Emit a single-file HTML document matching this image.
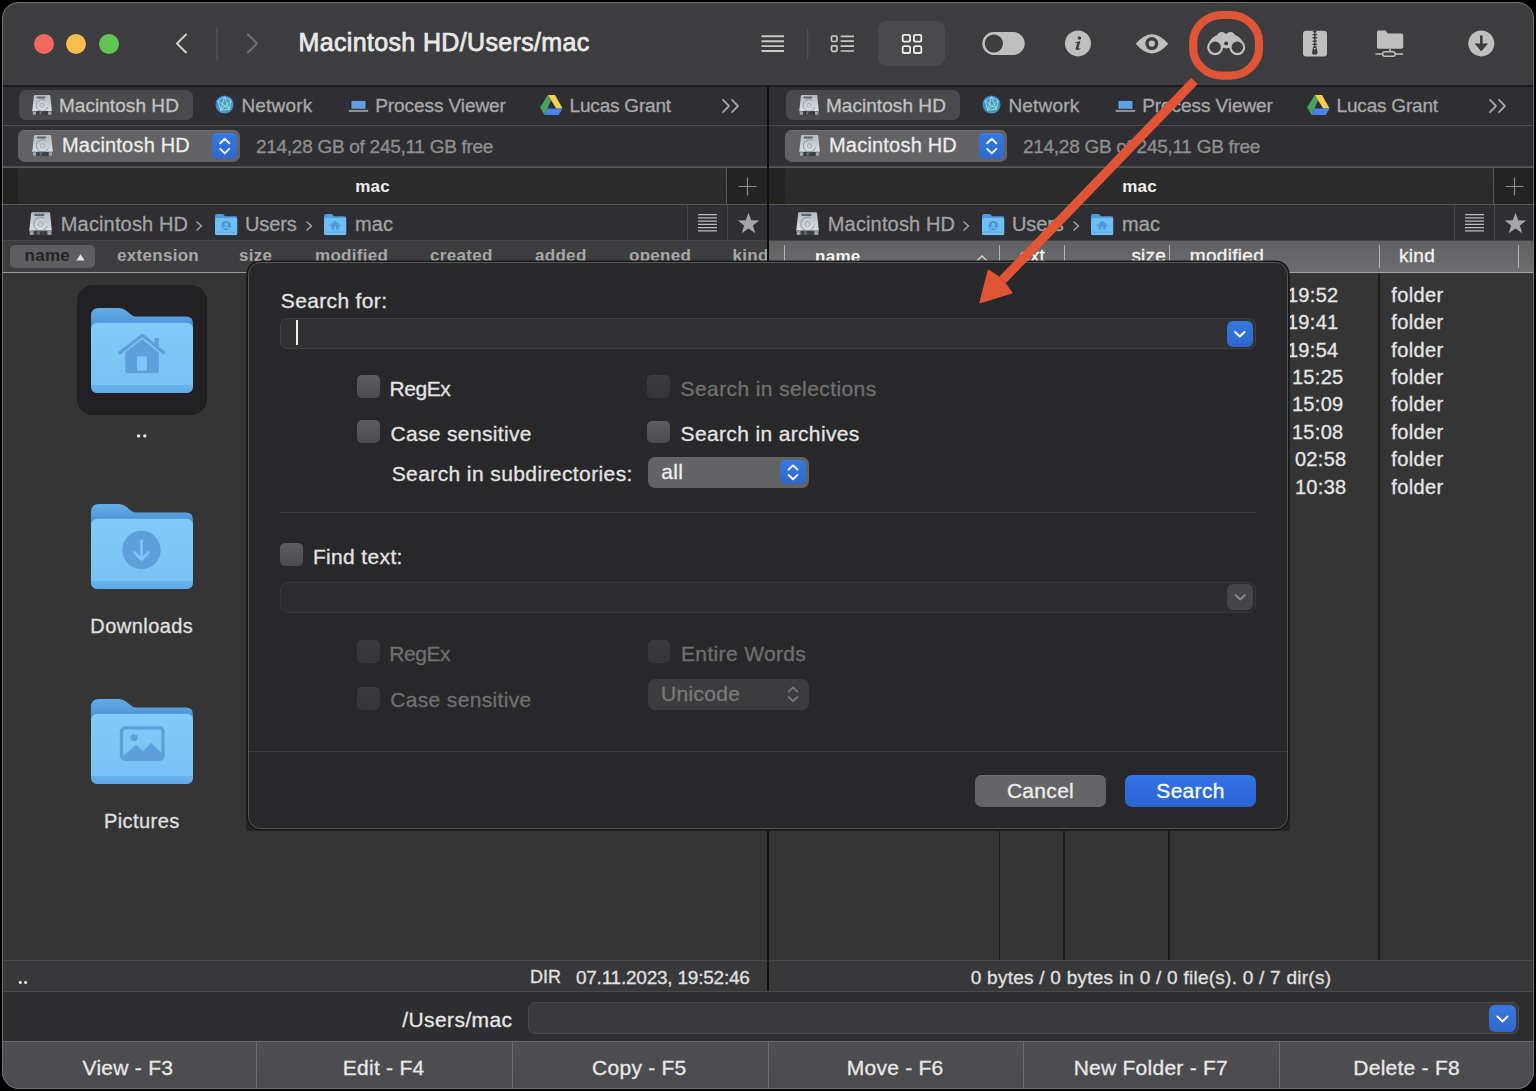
<!DOCTYPE html>
<html><head><meta charset="utf-8">
<style>
*{box-sizing:border-box;margin:0;padding:0}
html,body{width:1536px;height:1091px;overflow:hidden;background:#000;font-family:"Liberation Sans",sans-serif;color:#dcdcdc}
.a{position:absolute}
.t{position:absolute;white-space:pre;line-height:1}
svg{position:absolute;overflow:visible}
#win{position:absolute;left:0;top:0;width:1536px;height:1091px;clip-path:inset(2px round 17px);background:#353537}
#winborder{position:absolute;left:2px;top:2px;width:1532px;height:1087px;border-radius:17px;border:1px solid #717174;pointer-events:none;z-index:50}

</style></head><body>
<svg width="0" height="0" style="position:absolute"><defs><linearGradient id="hdg" x1="0" y1="0" x2="0" y2="1"><stop offset="0" stop-color="#b3bac1"/><stop offset="1" stop-color="#d9e1e7"/></linearGradient>
<symbol id="hd" viewBox="0 0 20 20">
 <path d="M1.9 0.7 Q2 0 2.7 0 L17.5 0 Q18.2 0 18.3 0.7 L19.9 16.4 L0.2 16.4 Z" fill="url(#hdg)"/>
 <rect x="0.3" y="16" width="19.5" height="4.1" rx="0.5" fill="#3b3e42"/>
 <rect x="0.7" y="16.4" width="3.3" height="3.4" fill="#9ea4aa"/><rect x="16" y="16.4" width="3.4" height="3.4" fill="#9ea4aa"/>
 <rect x="7.3" y="16.6" width="2" height="3" fill="#6c7278"/>
 <rect x="4.6" y="1.4" width="8.7" height="2" rx="0.6" fill="#5f656b"/>
 <path d="M13.2 5.3 A5.9 5.9 0 1 0 15.7 12" fill="none" stroke="#7b838b" stroke-width="0.7"/>
 <circle cx="10" cy="10.4" r="2.1" fill="none" stroke="#8f979f" stroke-width="0.6"/>
</symbol>
<radialGradient id="glg" cx="0.55" cy="0.6" r="0.6"><stop offset="0" stop-color="#4aa6ac"/><stop offset="0.6" stop-color="#4a95c0"/><stop offset="1" stop-color="#3a7fd8"/></radialGradient>
<symbol id="globe" viewBox="0 0 20 20">
 <circle cx="10" cy="10" r="9.5" fill="url(#glg)"/>
 <g fill="none" stroke="#b0f4f8" stroke-width="1" opacity="0.75">
  <path d="M3 6 L10 2 L17 6 L15 15 L6 16 Z"/><path d="M10 2 L6 16 M10 2 L15 15 M3 6 L15 15 M17 6 L6 16"/>
 </g>
</symbol>
<symbol id="laptop" viewBox="0 0 19.5 12.5" overflow="visible">
 <rect x="1.6" y="0" width="15.8" height="9.6" rx="0.8" fill="#1b1e23"/>
 <rect x="2.4" y="0.8" width="14.2" height="8" fill="#5f9fe2"/>
 <rect x="-0.2" y="9.8" width="19.4" height="2.2" rx="0.6" fill="#8e8e90"/>
</symbol>
<symbol id="gdrive" viewBox="0 0 22.6 20">
 <path d="M7.9 0 L11 5.6 L4.6 20 L0 12.6 Z" fill="#47a35f"/>
 <path d="M7.9 0 L15 0 L22.6 13.6 L16.2 13.6 Z" fill="#f8d153"/>
 <path d="M7.4 13.6 L22.6 13.6 L18.7 20 L4.6 20 Z" fill="#4c83ea"/>
</symbol>
<linearGradient id="fbk" x1="0" y1="0" x2="0" y2="0.2" gradientUnits="objectBoundingBox"><stop offset="0" stop-color="#64ade7"/><stop offset="0.6" stop-color="#589fdf"/><stop offset="1" stop-color="#4a90d4"/></linearGradient>
<linearGradient id="ffr" x1="0" y1="0" x2="0" y2="1"><stop offset="0" stop-color="#80cbf8"/><stop offset="0.88" stop-color="#78c3f4"/><stop offset="0.89" stop-color="#66b3ec"/><stop offset="1" stop-color="#5eaae8"/></linearGradient>
<symbol id="folder" viewBox="0 0 102 85">
 <path d="M0 8 Q0 0 8 0 L28 0 Q32 0 35 2.5 L40.5 7 Q42.5 8.5 45.5 8.5 L95 8.5 Q102 8.5 102 15.5 L102 78 Q102 85 95 85 L7 85 Q0 85 0 78 Z" fill="url(#fbk)"/>
 <path d="M0 21.5 Q0 14.7 7 14.7 L95 14.7 Q102 14.7 102 21.5 L102 78 Q102 85 95 85 L7 85 Q0 85 0 78 Z" fill="url(#ffr)"/>
</symbol>
<symbol id="homeglyph" viewBox="0 0 102 85">
 <path d="M34.3 44 L51.3 30.5 L67.8 44 L67.8 63 Q67.8 65.3 65.5 65.3 L36.6 65.3 Q34.3 65.3 34.3 63 Z" fill="#5c9fdb"/>
 <rect x="46" y="48.4" width="9.9" height="14.2" fill="#7ec8f7"/>
 <polyline points="28.8,44.7 51.3,27.3 72.8,44.7" fill="none" stroke="#7ec8f7" stroke-width="6" stroke-linecap="round" stroke-linejoin="round"/>
 <polyline points="28.8,44.7 51.3,27.3 72.8,44.7" fill="none" stroke="#5c9fdb" stroke-width="3.2" stroke-linecap="round" stroke-linejoin="round"/>
 <rect x="63.7" y="30" width="4.1" height="9.5" fill="#5c9fdb"/>
</symbol>
<symbol id="dlglyph" viewBox="0 0 102 85">
 <circle cx="50.5" cy="46" r="19.2" fill="#5c9fdb"/>
 <line x1="50.5" y1="36.5" x2="50.5" y2="55" stroke="#7ec8f7" stroke-width="2.6" stroke-linecap="round"/>
 <polyline points="43.5,48.5 50.5,55.5 57.5,48.5" fill="none" stroke="#7ec8f7" stroke-width="2.6" stroke-linecap="round" stroke-linejoin="round"/>
</symbol>
<symbol id="picglyph" viewBox="0 0 102 85">
 <rect x="30.4" y="28.8" width="41.6" height="31.6" rx="3.5" fill="none" stroke="#5c9fdb" stroke-width="3.2"/>
 <circle cx="43" cy="38.5" r="3.6" fill="#5c9fdb"/>
 <path d="M31 58 L45 46 L52 52 L60 44 L71.5 55 L71.5 60 L31 60 Z" fill="#5c9fdb"/>
</symbol>
<symbol id="sfolder" viewBox="0 0 22.4 21.3">
 <path d="M0 2 Q0 0 2 0 L7 0 Q8 0 9 1 L10 2.2 L20.4 2.2 Q22.4 2.2 22.4 4.2 L22.4 19.3 Q22.4 21.3 20.4 21.3 L2 21.3 Q0 21.3 0 19.3 Z" fill="#4f9bdc"/>
 <path d="M0 5.8 Q0 3.9 2 3.9 L20.4 3.9 Q22.4 3.9 22.4 5.8 L22.4 19.3 Q22.4 21.3 20.4 21.3 L2 21.3 Q0 21.3 0 19.3 Z" fill="#6fbff4"/>
 <rect x="0" y="17.6" width="22.4" height="1" fill="#5aaae8"/>
</symbol>
<symbol id="usrglyph" viewBox="0 0 22.4 21.3">
 <circle cx="11.2" cy="11.7" r="4.8" fill="#4f95d6"/>
 <circle cx="11.2" cy="10.4" r="1.7" fill="#6fbff4"/>
 <path d="M8.3 14.6 Q11.2 12 14.1 14.6" fill="none" stroke="#6fbff4" stroke-width="1.3"/>
</symbol>
<symbol id="hmglyph" viewBox="0 0 22.4 21.3">
 <path d="M7.6 11.5 L11.2 8.6 L14.8 11.5 L14.8 15.6 L7.6 15.6 Z" fill="#4f95d6"/>
 <rect x="10.2" y="12.6" width="2" height="3" fill="#6fbff4"/>
 <polyline points="6.2,11.8 11.2,7.6 16.2,11.8" fill="none" stroke="#4f95d6" stroke-width="1.2" stroke-linecap="round"/>
</symbol>
</defs></svg>
<div id="win">
<div class="a" style="left:0px;top:0px;width:1536px;height:85px;background:#3d3d40;"></div>
<div class="a" style="left:0px;top:85px;width:1536px;height:2px;background:#1c1c1e;"></div>
<div class="a" style="left:33.5px;top:33.5px;width:20px;height:20px;border-radius:50%;background:#ee6a5f"></div>
<div class="a" style="left:66px;top:33.5px;width:20px;height:20px;border-radius:50%;background:#f5be4f"></div>
<div class="a" style="left:98.5px;top:33.5px;width:20px;height:20px;border-radius:50%;background:#62c554"></div>
<svg width="1536" height="90" style="left:0;top:0">
 <polyline points="186,34.5 177,43.5 186,52.5" fill="none" stroke="#d2d2d2" stroke-width="2" stroke-linecap="round" stroke-linejoin="round"/>
 <line x1="217" y1="27.5" x2="217" y2="59.5" stroke="#58585b" stroke-width="1.3"/>
 <polyline points="248,34.5 257,43.5 248,52.5" fill="none" stroke="#707073" stroke-width="2" stroke-linecap="round" stroke-linejoin="round"/>
 <g stroke="#c9c9c9" stroke-width="1.9">
  <line x1="761.5" y1="36.3" x2="784" y2="36.3"/><line x1="761.5" y1="41.2" x2="784" y2="41.2"/>
  <line x1="761.5" y1="46.1" x2="784" y2="46.1"/><line x1="761.5" y1="51" x2="784" y2="51"/>
 </g>
 <line x1="807.7" y1="28" x2="807.7" y2="59.5" stroke="#535356" stroke-width="1.2"/>
 <g stroke="#c9c9c9" stroke-width="1.7" fill="none">
  <rect x="831.5" y="36" width="5.5" height="5.5" rx="1.3"/><rect x="831.5" y="45.8" width="5.5" height="5.5" rx="1.3"/>
  <line x1="840.6" y1="36.3" x2="854" y2="36.3"/><line x1="840.6" y1="41.2" x2="854" y2="41.2"/>
  <line x1="840.6" y1="46.1" x2="854" y2="46.1"/><line x1="840.6" y1="51" x2="854" y2="51"/>
 </g>
 <rect x="878" y="20.7" width="67" height="45.3" rx="9" fill="#4a4a4d"/>
 <g stroke="#ececec" stroke-width="1.8" fill="none">
  <rect x="902.7" y="34.9" width="7.4" height="6.8" rx="1.6"/><rect x="913.9" y="34.9" width="7.4" height="6.8" rx="1.6"/>
  <rect x="902.7" y="46.2" width="7.4" height="6.8" rx="1.6"/><rect x="913.9" y="46.2" width="7.4" height="6.8" rx="1.6"/>
 </g>
 <rect x="982.3" y="32.1" width="42.4" height="22.8" rx="11.4" fill="#bfbfbf"/>
 <circle cx="993.9" cy="43.5" r="9.1" fill="#3d3d40"/>
 <circle cx="1078" cy="43.4" r="13" fill="#bfbfbf"/>
 <circle cx="1079.4" cy="38.1" r="1.75" fill="#3d3d40"/>
 <path d="M1074.9 42.7 Q1077.6 41.1 1080.4 41.2 L1078.5 47.9 Q1078.3 48.8 1079.2 48.5 L1080.9 47.9 Q1079.9 50 1077.4 50.1 Q1075.1 50.2 1075.8 48.1 L1077.2 43.2 Q1076.4 42.9 1074.9 43 Z" fill="#3d3d40"/>
 <path d="M1135.7 43.8 Q1151.8 24.5 1168.3 43.8 Q1151.8 63 1135.7 43.8 Z" fill="#bfbfbf"/>
 <circle cx="1151.8" cy="43.6" r="6.5" fill="#3d3d40"/>
 <circle cx="1151.8" cy="43.6" r="3.2" fill="#bfbfbf"/>
 <path d="M1208.4 44 Q1211 37.5 1217 35 L1218.5 33.2 Q1221.8 30.6 1225 33.3 L1226.1 34 L1227.2 33.3 Q1230.5 30.6 1233.7 33.2 L1235.2 35 Q1241.2 37.5 1243.8 44 L1240 47 L1212 47 Z" fill="#bfbfbf"/>
 <circle cx="1215.1" cy="47.3" r="6.85" fill="#3d3d40" stroke="#bfbfbf" stroke-width="2.2"/>
 <circle cx="1237.3" cy="47.3" r="6.85" fill="#3d3d40" stroke="#bfbfbf" stroke-width="2.2"/>
 <path d="M1221.5 39.5 L1230.7 39.5 L1230.2 47.6 Q1226.1 49.2 1222 47.6 Z" fill="#bfbfbf"/>
 <circle cx="1226.1" cy="43.5" r="2" fill="#3d3d40"/>
 <rect x="1303" y="30.7" width="24" height="25.7" rx="3.2" fill="#bfbfbf"/>
 <rect x="1313" y="30.7" width="3.6" height="1.6" fill="#3d3d40"/>
 <rect x="1314.1" y="30.7" width="1.4" height="17" fill="#3d3d40"/>
 <g fill="#3d3d40"><rect x="1312.3" y="33.9" width="5" height="1.4" rx="0.7"/><rect x="1312.3" y="37.1" width="5" height="1.4" rx="0.7"/><rect x="1312.3" y="40.4" width="5" height="1.4" rx="0.7"/><rect x="1312.3" y="43.7" width="5" height="1.4" rx="0.7"/></g>
 <path d="M1313.2 46.4 L1316.4 46.4 L1317.6 53 Q1317.6 54.8 1314.8 54.8 Q1312 54.8 1312 53 Z" fill="#3d3d40"/>
 <rect x="1314" y="48" width="1.6" height="1.4" fill="#bfbfbf"/>
 <path d="M1377 32 Q1377 30.5 1378.5 30.5 L1385.5 30.5 L1388 33.6 L1401.7 33.6 Q1403.2 33.6 1403.2 35.1 L1403.2 47.3 Q1403.2 48.7 1401.7 48.7 L1378.5 48.7 Q1377 48.7 1377 47.3 Z" fill="#bfbfbf"/>
 <line x1="1390" y1="48.7" x2="1390" y2="52" stroke="#bfbfbf" stroke-width="1.6"/>
 <line x1="1375.5" y1="54" x2="1403" y2="54" stroke="#bfbfbf" stroke-width="1.6"/>
 <rect x="1382.6" y="51.7" width="12.6" height="4.6" rx="2.3" fill="#3d3d40" stroke="#bfbfbf" stroke-width="1.5"/>
 <circle cx="1481.3" cy="43.4" r="13" fill="#bfbfbf"/>
 <rect x="1480" y="35.5" width="2.6" height="9" fill="#3d3d40"/>
 <path d="M1474.5 43.5 L1488.1 43.5 L1481.3 51.5 Z" fill="#3d3d40"/>
</svg>

<div class="t" style="left:298.5px;top:30.44px;font-size:25px;font-weight:400;color:#e9e9e9;letter-spacing:0.35px;-webkit-text-stroke:0.75px #e9e9e9;">Macintosh HD/Users/mac</div>
<div class="a" style="left:0px;top:87px;width:768px;height:38px;background:#2f2f33;"></div>
<div class="a" style="left:0px;top:125px;width:768px;height:1px;background:#4d4d50;"></div>
<div class="a" style="left:19px;top:90px;width:174px;height:29.5px;border-radius:7px;background:#4a4a4d"></div>
<svg style="left:32px;top:94.5px" width="20" height="20"><use href="#hd" width="20" height="20"/></svg>
<div class="t" style="left:58.9px;top:95.52px;font-size:19px;font-weight:400;color:#c3c3c3;letter-spacing:0.06px;-webkit-text-stroke:0.3px #c3c3c3;">Macintosh HD</div>
<svg style="left:214.7px;top:95.2px" width="19" height="19"><use href="#globe" width="19" height="19"/></svg>
<div class="t" style="left:241.4px;top:95.52px;font-size:19px;font-weight:400;color:#a9a9aa;letter-spacing:0.2px;-webkit-text-stroke:0.3px #a9a9aa;">Network</div>
<svg style="left:348.6px;top:100px" width="19.5" height="12.5"><use href="#laptop" width="19.5" height="12.5"/></svg>
<div class="t" style="left:375.2px;top:95.52px;font-size:19px;font-weight:400;color:#a9a9aa;letter-spacing:-0.07px;-webkit-text-stroke:0.3px #a9a9aa;">Process Viewer</div>
<svg style="left:540.4px;top:94.9px" width="22.6" height="20"><use href="#gdrive" width="22.6" height="20"/></svg>
<div class="t" style="left:569.6px;top:95.52px;font-size:19px;font-weight:400;color:#a9a9aa;letter-spacing:-0.2px;-webkit-text-stroke:0.3px #a9a9aa;">Lucas Grant</div>
<svg style="left:720px;top:96.6px;" width="24" height="18" viewBox="0 0 24 18"><polyline points="3,2.8 9,9 3,15.2" fill="none" stroke="#a5a5a6" stroke-width="1.8" stroke-linecap="round" stroke-linejoin="round"/><polyline points="12,2.8 18,9 12,15.2" fill="none" stroke="#a5a5a6" stroke-width="1.8" stroke-linecap="round" stroke-linejoin="round"/></svg>
<div class="a" style="left:0px;top:126px;width:768px;height:40px;background:#2f2f33;"></div>
<div class="a" style="left:0px;top:166px;width:768px;height:1px;background:#4d4d50;"></div>
<div class="a" style="left:18px;top:130px;width:222px;height:32px;border-radius:7px;background:#636366;box-shadow:inset 0 0.5px 0 #7a7a7d"></div>
<div class="a" style="left:211.5px;top:132.8px;width:25.5px;height:26.2px;border-radius:5px;background:linear-gradient(#3779e0,#2f67cb)"></div>
<svg style="left:211.5px;top:132.8px;" width="25.5" height="26.2" viewBox="0 0 25.5 26.2"><polyline points="8.2,10.3 12.75,5.8 17.3,10.3" fill="none" stroke="#eef3fb" stroke-width="2" stroke-linecap="round" stroke-linejoin="round"/><polyline points="8.2,15.9 12.75,20.4 17.3,15.9" fill="none" stroke="#eef3fb" stroke-width="2" stroke-linecap="round" stroke-linejoin="round"/></svg>
<svg style="left:32px;top:135px" width="21" height="21"><use href="#hd" width="21" height="21"/></svg>
<div class="t" style="left:62px;top:135.47px;font-size:20px;font-weight:400;color:#ececec;letter-spacing:0.2px;-webkit-text-stroke:0.3px #ececec;">Macintosh HD</div>
<div class="t" style="left:256px;top:136.62px;font-size:19px;font-weight:400;color:#8f8f91;letter-spacing:-0.28px;-webkit-text-stroke:0.3px #8f8f91;">214,28 GB of 245,11 GB free</div>
<div class="a" style="left:0px;top:167px;width:768px;height:37px;background:linear-gradient(#2e2d2c,#2a2929)"></div>
<div class="a" style="left:0px;top:167px;width:768px;height:1px;background:#58585a;"></div>
<div class="a" style="left:0px;top:204px;width:768px;height:1px;background:#58585a;"></div>
<div class="a" style="left:0px;top:168px;width:18px;height:36px;background:#232221;"></div>
<div class="a" style="left:727px;top:168px;width:40px;height:36px;background:#232323;"></div>
<div class="a" style="left:726px;top:168px;width:1px;height:36px;background:#58585a;"></div>
<svg style="left:737.5px;top:177px;" width="19" height="19" viewBox="0 0 19 19"><line x1="9.5" y1="0.5" x2="9.5" y2="18.5" stroke="#8e8e8e" stroke-width="1.2"/><line x1="0.5" y1="9.5" x2="18.5" y2="9.5" stroke="#8e8e8e" stroke-width="1.2"/></svg>
<div class="t" style="left:72.5px;width:600px;text-align:center;top:177.71px;font-size:17px;font-weight:700;color:#efefef;letter-spacing:0.2px;">mac</div>
<div class="a" style="left:0px;top:205px;width:768px;height:35px;background:#2f2f33;"></div>
<div class="a" style="left:0px;top:240px;width:768px;height:1px;background:#464649;"></div>
<div class="a" style="left:687px;top:205px;width:1px;height:35px;background:#48484b;"></div>
<div class="a" style="left:727px;top:205px;width:1px;height:35px;background:#48484b;"></div>
<svg style="left:698px;top:213px;" width="20" height="20" viewBox="0 0 20 20"><line x1="0" y1="1.70" x2="19" y2="1.70" stroke="#bdbdbd" stroke-width="1.3"/><line x1="0" y1="4.92" x2="19" y2="4.92" stroke="#bdbdbd" stroke-width="1.3"/><line x1="0" y1="8.14" x2="19" y2="8.14" stroke="#bdbdbd" stroke-width="1.3"/><line x1="0" y1="11.36" x2="19" y2="11.36" stroke="#bdbdbd" stroke-width="1.3"/><line x1="0" y1="14.58" x2="19" y2="14.58" stroke="#bdbdbd" stroke-width="1.3"/><line x1="0" y1="17.80" x2="19" y2="17.80" stroke="#bdbdbd" stroke-width="1.3"/></svg>
<svg style="left:736.5px;top:212px;" width="23" height="22" viewBox="0 0 23 22"><path d="M11.5 0.8 L14.2 8.3 L22.2 8.5 L15.9 13.4 L18.2 21.2 L11.5 16.6 L4.8 21.2 L7.1 13.4 L0.8 8.5 L8.8 8.3 Z" fill="#a6a6a8"/></svg>
<svg style="left:28.7px;top:211.7px" width="23" height="23.3"><use href="#hd" width="23" height="23.3"/></svg>
<div class="t" style="left:60.8px;top:213.77px;font-size:20px;font-weight:400;color:#a3a3a5;letter-spacing:0.15px;-webkit-text-stroke:0.3px #a3a3a5;">Macintosh HD</div>
<svg style="left:196px;top:220.6px;" width="7" height="10" viewBox="0 0 7 10"><polyline points="1,1 5.5,5 1,9" fill="none" stroke="#a3a3a5" stroke-width="1.6" stroke-linecap="round" stroke-linejoin="round"/></svg>
<svg style="left:214.6px;top:213.9px" width="22.4" height="21.3"><use href="#sfolder" width="22.4" height="21.3"/></svg>
<svg style="left:214.6px;top:213.9px" width="22.4" height="21.3"><use href="#usrglyph" width="22.4" height="21.3"/></svg>
<div class="t" style="left:245px;top:213.67px;font-size:20px;font-weight:400;color:#a3a3a5;letter-spacing:-0.1px;-webkit-text-stroke:0.3px #a3a3a5;">Users</div>
<svg style="left:305.5px;top:220.6px;" width="7" height="10" viewBox="0 0 7 10"><polyline points="1,1 5.5,5 1,9" fill="none" stroke="#a3a3a5" stroke-width="1.6" stroke-linecap="round" stroke-linejoin="round"/></svg>
<svg style="left:324px;top:213.9px" width="22.4" height="21.3"><use href="#sfolder" width="22.4" height="21.3"/></svg>
<svg style="left:324px;top:213.9px" width="22.4" height="21.3"><use href="#hmglyph" width="22.4" height="21.3"/></svg>
<div class="t" style="left:355px;top:213.67px;font-size:20px;font-weight:400;color:#a3a3a5;letter-spacing:0.15px;-webkit-text-stroke:0.3px #a3a3a5;">mac</div>
<div class="a" style="left:767px;top:87px;width:768px;height:38px;background:#2f2f33;"></div>
<div class="a" style="left:767px;top:125px;width:768px;height:1px;background:#4d4d50;"></div>
<div class="a" style="left:786px;top:90px;width:174px;height:29.5px;border-radius:7px;background:#4a4a4d"></div>
<svg style="left:799px;top:94.5px" width="20" height="20"><use href="#hd" width="20" height="20"/></svg>
<div class="t" style="left:825.9px;top:95.52px;font-size:19px;font-weight:400;color:#c3c3c3;letter-spacing:0.06px;-webkit-text-stroke:0.3px #c3c3c3;">Macintosh HD</div>
<svg style="left:981.7px;top:95.2px" width="19" height="19"><use href="#globe" width="19" height="19"/></svg>
<div class="t" style="left:1008.4px;top:95.52px;font-size:19px;font-weight:400;color:#a9a9aa;letter-spacing:0.2px;-webkit-text-stroke:0.3px #a9a9aa;">Network</div>
<svg style="left:1115.6px;top:100px" width="19.5" height="12.5"><use href="#laptop" width="19.5" height="12.5"/></svg>
<div class="t" style="left:1142.2px;top:95.52px;font-size:19px;font-weight:400;color:#a9a9aa;letter-spacing:-0.07px;-webkit-text-stroke:0.3px #a9a9aa;">Process Viewer</div>
<svg style="left:1307.4px;top:94.9px" width="22.6" height="20"><use href="#gdrive" width="22.6" height="20"/></svg>
<div class="t" style="left:1336.6px;top:95.52px;font-size:19px;font-weight:400;color:#a9a9aa;letter-spacing:-0.2px;-webkit-text-stroke:0.3px #a9a9aa;">Lucas Grant</div>
<svg style="left:1487px;top:96.6px;" width="24" height="18" viewBox="0 0 24 18"><polyline points="3,2.8 9,9 3,15.2" fill="none" stroke="#a5a5a6" stroke-width="1.8" stroke-linecap="round" stroke-linejoin="round"/><polyline points="12,2.8 18,9 12,15.2" fill="none" stroke="#a5a5a6" stroke-width="1.8" stroke-linecap="round" stroke-linejoin="round"/></svg>
<div class="a" style="left:767px;top:126px;width:768px;height:40px;background:#2f2f33;"></div>
<div class="a" style="left:767px;top:166px;width:768px;height:1px;background:#4d4d50;"></div>
<div class="a" style="left:785px;top:130px;width:222px;height:32px;border-radius:7px;background:#636366;box-shadow:inset 0 0.5px 0 #7a7a7d"></div>
<div class="a" style="left:978.5px;top:132.8px;width:25.5px;height:26.2px;border-radius:5px;background:linear-gradient(#3779e0,#2f67cb)"></div>
<svg style="left:978.5px;top:132.8px;" width="25.5" height="26.2" viewBox="0 0 25.5 26.2"><polyline points="8.2,10.3 12.75,5.8 17.3,10.3" fill="none" stroke="#eef3fb" stroke-width="2" stroke-linecap="round" stroke-linejoin="round"/><polyline points="8.2,15.9 12.75,20.4 17.3,15.9" fill="none" stroke="#eef3fb" stroke-width="2" stroke-linecap="round" stroke-linejoin="round"/></svg>
<svg style="left:799px;top:135px" width="21" height="21"><use href="#hd" width="21" height="21"/></svg>
<div class="t" style="left:829px;top:135.47px;font-size:20px;font-weight:400;color:#ececec;letter-spacing:0.2px;-webkit-text-stroke:0.3px #ececec;">Macintosh HD</div>
<div class="t" style="left:1023px;top:136.62px;font-size:19px;font-weight:400;color:#8f8f91;letter-spacing:-0.28px;-webkit-text-stroke:0.3px #8f8f91;">214,28 GB of 245,11 GB free</div>
<div class="a" style="left:767px;top:167px;width:768px;height:37px;background:linear-gradient(#2e2d2c,#2a2929)"></div>
<div class="a" style="left:767px;top:167px;width:768px;height:1px;background:#58585a;"></div>
<div class="a" style="left:767px;top:204px;width:768px;height:1px;background:#58585a;"></div>
<div class="a" style="left:767px;top:168px;width:18px;height:36px;background:#232221;"></div>
<div class="a" style="left:1494px;top:168px;width:40px;height:36px;background:#232323;"></div>
<div class="a" style="left:1493px;top:168px;width:1px;height:36px;background:#58585a;"></div>
<svg style="left:1504.5px;top:177px;" width="19" height="19" viewBox="0 0 19 19"><line x1="9.5" y1="0.5" x2="9.5" y2="18.5" stroke="#8e8e8e" stroke-width="1.2"/><line x1="0.5" y1="9.5" x2="18.5" y2="9.5" stroke="#8e8e8e" stroke-width="1.2"/></svg>
<div class="t" style="left:839.5px;width:600px;text-align:center;top:177.71px;font-size:17px;font-weight:700;color:#efefef;letter-spacing:0.2px;">mac</div>
<div class="a" style="left:767px;top:205px;width:768px;height:35px;background:#2f2f33;"></div>
<div class="a" style="left:767px;top:240px;width:768px;height:1px;background:#464649;"></div>
<div class="a" style="left:1454px;top:205px;width:1px;height:35px;background:#48484b;"></div>
<div class="a" style="left:1494px;top:205px;width:1px;height:35px;background:#48484b;"></div>
<svg style="left:1465px;top:213px;" width="20" height="20" viewBox="0 0 20 20"><line x1="0" y1="1.70" x2="19" y2="1.70" stroke="#bdbdbd" stroke-width="1.3"/><line x1="0" y1="4.92" x2="19" y2="4.92" stroke="#bdbdbd" stroke-width="1.3"/><line x1="0" y1="8.14" x2="19" y2="8.14" stroke="#bdbdbd" stroke-width="1.3"/><line x1="0" y1="11.36" x2="19" y2="11.36" stroke="#bdbdbd" stroke-width="1.3"/><line x1="0" y1="14.58" x2="19" y2="14.58" stroke="#bdbdbd" stroke-width="1.3"/><line x1="0" y1="17.80" x2="19" y2="17.80" stroke="#bdbdbd" stroke-width="1.3"/></svg>
<svg style="left:1503.5px;top:212px;" width="23" height="22" viewBox="0 0 23 22"><path d="M11.5 0.8 L14.2 8.3 L22.2 8.5 L15.9 13.4 L18.2 21.2 L11.5 16.6 L4.8 21.2 L7.1 13.4 L0.8 8.5 L8.8 8.3 Z" fill="#a6a6a8"/></svg>
<svg style="left:795.7px;top:211.7px" width="23" height="23.3"><use href="#hd" width="23" height="23.3"/></svg>
<div class="t" style="left:827.8px;top:213.77px;font-size:20px;font-weight:400;color:#a3a3a5;letter-spacing:0.15px;-webkit-text-stroke:0.3px #a3a3a5;">Macintosh HD</div>
<svg style="left:963px;top:220.6px;" width="7" height="10" viewBox="0 0 7 10"><polyline points="1,1 5.5,5 1,9" fill="none" stroke="#a3a3a5" stroke-width="1.6" stroke-linecap="round" stroke-linejoin="round"/></svg>
<svg style="left:981.6px;top:213.9px" width="22.4" height="21.3"><use href="#sfolder" width="22.4" height="21.3"/></svg>
<svg style="left:981.6px;top:213.9px" width="22.4" height="21.3"><use href="#usrglyph" width="22.4" height="21.3"/></svg>
<div class="t" style="left:1012px;top:213.67px;font-size:20px;font-weight:400;color:#a3a3a5;letter-spacing:-0.1px;-webkit-text-stroke:0.3px #a3a3a5;">Users</div>
<svg style="left:1072.5px;top:220.6px;" width="7" height="10" viewBox="0 0 7 10"><polyline points="1,1 5.5,5 1,9" fill="none" stroke="#a3a3a5" stroke-width="1.6" stroke-linecap="round" stroke-linejoin="round"/></svg>
<svg style="left:1091px;top:213.9px" width="22.4" height="21.3"><use href="#sfolder" width="22.4" height="21.3"/></svg>
<svg style="left:1091px;top:213.9px" width="22.4" height="21.3"><use href="#hmglyph" width="22.4" height="21.3"/></svg>
<div class="t" style="left:1122px;top:213.67px;font-size:20px;font-weight:400;color:#a3a3a5;letter-spacing:0.15px;-webkit-text-stroke:0.3px #a3a3a5;">mac</div>
<div class="a" style="left:0px;top:241px;width:768px;height:31px;background:#3d3d3f;"></div>
<div class="a" style="left:0px;top:272px;width:768px;height:1px;background:#9c9c9e;"></div>
<div class="a" style="left:10px;top:245px;width:85px;height:23px;border-radius:5px;background:#5e5e60"></div>
<div class="t" style="left:24.5px;top:246.81px;font-size:17px;font-weight:700;color:#232325;letter-spacing:0.3px;">name</div>
<svg style="left:75.5px;top:253.5px;" width="9" height="7" viewBox="0 0 9 7"><path d="M4.5 0.3 L8.7 6.6 L0.3 6.6 Z" fill="#e4e4e4"/></svg>
<div class="t" style="left:117px;top:246.81px;font-size:17px;font-weight:700;color:#a7a7a9;letter-spacing:0.3px;">extension</div>
<div class="t" style="left:239px;top:246.81px;font-size:17px;font-weight:700;color:#a7a7a9;letter-spacing:0.3px;">size</div>
<div class="t" style="left:315px;top:246.81px;font-size:17px;font-weight:700;color:#a7a7a9;letter-spacing:0.3px;">modified</div>
<div class="t" style="left:430px;top:246.81px;font-size:17px;font-weight:700;color:#a7a7a9;letter-spacing:0.3px;">created</div>
<div class="t" style="left:535px;top:246.81px;font-size:17px;font-weight:700;color:#a7a7a9;letter-spacing:0.3px;">added</div>
<div class="t" style="left:629px;top:246.81px;font-size:17px;font-weight:700;color:#a7a7a9;letter-spacing:0.3px;">opened</div>
<div class="t" style="left:732.5px;top:246.81px;font-size:17px;font-weight:700;color:#a7a7a9;letter-spacing:0.3px;">kind</div>
<div class="a" style="left:2px;top:273px;width:765px;height:688px;background:#353536;"></div>
<div class="a" style="left:0px;top:960px;width:768px;height:1px;background:#48484a;"></div>
<div class="a" style="left:76.5px;top:285px;width:130.5px;height:130px;border-radius:16px;background:#212123"></div>
<svg style="left:91px;top:308.2px" width="102" height="85"><use href="#folder" width="102" height="85"/></svg>
<svg style="left:91px;top:308.2px" width="102" height="85"><use href="#homeglyph" width="102" height="85"/></svg>
<svg style="left:130px;top:430px;" width="24" height="12" viewBox="0 0 24 12"><circle cx="8.6" cy="5.9" r="1.7" fill="#e8e8e8"/><circle cx="14.8" cy="5.9" r="1.7" fill="#e8e8e8"/></svg>
<svg style="left:91px;top:503.7px" width="102" height="85"><use href="#folder" width="102" height="85"/></svg>
<svg style="left:91px;top:503.7px" width="102" height="85"><use href="#dlglyph" width="102" height="85"/></svg>
<div class="t" style="left:-158.2px;width:600px;text-align:center;top:616.37px;font-size:20px;font-weight:400;color:#e0e0e0;letter-spacing:0.45px;-webkit-text-stroke:0.3px #e0e0e0;">Downloads</div>
<svg style="left:91px;top:698.8px" width="102" height="85"><use href="#folder" width="102" height="85"/></svg>
<svg style="left:91px;top:698.8px" width="102" height="85"><use href="#picglyph" width="102" height="85"/></svg>
<div class="t" style="left:-158.2px;width:600px;text-align:center;top:811.47px;font-size:20px;font-weight:400;color:#e0e0e0;letter-spacing:0.45px;-webkit-text-stroke:0.3px #e0e0e0;">Pictures</div>
<div class="a" style="left:767px;top:87px;width:2px;height:905px;background:#0e0e0f;"></div>
<div class="a" style="left:769px;top:241px;width:767px;height:31px;background:linear-gradient(#606062,#6e6e70)"></div>
<div class="a" style="left:769px;top:272px;width:767px;height:1px;background:#a5a5a7;"></div>
<div class="a" style="left:769px;top:273px;width:767px;height:688px;background:#353536;"></div>
<div class="a" style="left:769px;top:960px;width:767px;height:1px;background:#48484a;"></div>
<div class="a" style="left:783.6px;top:245px;width:1.2px;height:23px;background:#b4b4b6;"></div>
<div class="a" style="left:999.3px;top:245px;width:1.2px;height:23px;background:#b4b4b6;"></div>
<div class="a" style="left:1063.6px;top:245px;width:1.2px;height:23px;background:#b4b4b6;"></div>
<div class="a" style="left:1168.5px;top:245px;width:1.2px;height:23px;background:#b4b4b6;"></div>
<div class="a" style="left:1378.7px;top:245px;width:1.2px;height:23px;background:#b4b4b6;"></div>
<div class="a" style="left:1517.5px;top:245px;width:1.2px;height:23px;background:#b4b4b6;"></div>
<div class="a" style="left:998.5px;top:273px;width:1.5px;height:687px;background:#1b1b1c;"></div>
<div class="a" style="left:1063px;top:273px;width:1.5px;height:687px;background:#1b1b1c;"></div>
<div class="a" style="left:1168px;top:273px;width:1.5px;height:687px;background:#1b1b1c;"></div>
<div class="a" style="left:1378px;top:273px;width:1.5px;height:687px;background:#1b1b1c;"></div>
<div class="t" style="left:815px;top:248.11px;font-size:17px;font-weight:700;color:#f4f4f4;letter-spacing:0.3px;">name</div>
<svg style="left:976px;top:254px;" width="12" height="8" viewBox="0 0 12 8"><polyline points="1,7 6,2 11,7" fill="none" stroke="#d6d6d6" stroke-width="1.3"/></svg>
<div class="t" style="left:1019.5px;top:246.42px;font-size:19px;font-weight:400;color:#f4f4f4;letter-spacing:0px;-webkit-text-stroke:0.3px #f4f4f4;">ext</div>
<div class="t" style="right:370px;top:246.42px;font-size:19px;font-weight:400;color:#f4f4f4;letter-spacing:0.2px;-webkit-text-stroke:0.3px #f4f4f4;">size</div>
<div class="t" style="left:1189.8px;top:246.42px;font-size:19px;font-weight:400;color:#f4f4f4;letter-spacing:0.3px;-webkit-text-stroke:0.3px #f4f4f4;">modified</div>
<div class="t" style="left:1399px;top:246.42px;font-size:19px;font-weight:400;color:#f4f4f4;letter-spacing:0.3px;-webkit-text-stroke:0.3px #f4f4f4;">kind</div>
<div class="t" style="right:197.5px;top:284.77px;font-size:20px;font-weight:400;color:#e6e6e6;letter-spacing:0.3px;-webkit-text-stroke:0.3px #e6e6e6;">19:52</div>
<div class="t" style="left:1391.3px;top:284.77px;font-size:20px;font-weight:400;color:#e6e6e6;letter-spacing:0.35px;-webkit-text-stroke:0.3px #e6e6e6;">folder</div>
<div class="t" style="right:197.5px;top:312.17px;font-size:20px;font-weight:400;color:#e6e6e6;letter-spacing:0.3px;-webkit-text-stroke:0.3px #e6e6e6;">19:41</div>
<div class="t" style="left:1391.3px;top:312.17px;font-size:20px;font-weight:400;color:#e6e6e6;letter-spacing:0.35px;-webkit-text-stroke:0.3px #e6e6e6;">folder</div>
<div class="t" style="right:197.5px;top:339.57px;font-size:20px;font-weight:400;color:#e6e6e6;letter-spacing:0.3px;-webkit-text-stroke:0.3px #e6e6e6;">19:54</div>
<div class="t" style="left:1391.3px;top:339.57px;font-size:20px;font-weight:400;color:#e6e6e6;letter-spacing:0.35px;-webkit-text-stroke:0.3px #e6e6e6;">folder</div>
<div class="t" style="right:192.5px;top:366.97px;font-size:20px;font-weight:400;color:#e6e6e6;letter-spacing:0.3px;-webkit-text-stroke:0.3px #e6e6e6;">15:25</div>
<div class="t" style="left:1391.3px;top:366.97px;font-size:20px;font-weight:400;color:#e6e6e6;letter-spacing:0.35px;-webkit-text-stroke:0.3px #e6e6e6;">folder</div>
<div class="t" style="right:192.5px;top:394.37px;font-size:20px;font-weight:400;color:#e6e6e6;letter-spacing:0.3px;-webkit-text-stroke:0.3px #e6e6e6;">15:09</div>
<div class="t" style="left:1391.3px;top:394.37px;font-size:20px;font-weight:400;color:#e6e6e6;letter-spacing:0.35px;-webkit-text-stroke:0.3px #e6e6e6;">folder</div>
<div class="t" style="right:192.5px;top:421.77px;font-size:20px;font-weight:400;color:#e6e6e6;letter-spacing:0.3px;-webkit-text-stroke:0.3px #e6e6e6;">15:08</div>
<div class="t" style="left:1391.3px;top:421.77px;font-size:20px;font-weight:400;color:#e6e6e6;letter-spacing:0.35px;-webkit-text-stroke:0.3px #e6e6e6;">folder</div>
<div class="t" style="right:189.5px;top:449.17px;font-size:20px;font-weight:400;color:#e6e6e6;letter-spacing:0.3px;-webkit-text-stroke:0.3px #e6e6e6;">02:58</div>
<div class="t" style="left:1391.3px;top:449.17px;font-size:20px;font-weight:400;color:#e6e6e6;letter-spacing:0.35px;-webkit-text-stroke:0.3px #e6e6e6;">folder</div>
<div class="t" style="right:189.5px;top:476.57px;font-size:20px;font-weight:400;color:#e6e6e6;letter-spacing:0.3px;-webkit-text-stroke:0.3px #e6e6e6;">10:38</div>
<div class="t" style="left:1391.3px;top:476.57px;font-size:20px;font-weight:400;color:#e6e6e6;letter-spacing:0.35px;-webkit-text-stroke:0.3px #e6e6e6;">folder</div>
<div class="a" style="left:0px;top:961px;width:1536px;height:30px;background:#38383b;"></div>
<div class="a" style="left:0px;top:991px;width:1536px;height:1px;background:#4a4a4d;"></div>
<div class="a" style="left:767px;top:962px;width:2px;height:29px;background:#0e0e0f;"></div>
<svg style="left:10px;top:976px;" width="24" height="12" viewBox="0 0 24 12"><circle cx="10.3" cy="6.4" r="1.55" fill="#e0e0e0"/><circle cx="15.6" cy="6.4" r="1.55" fill="#e0e0e0"/></svg>
<div class="t" style="left:530px;top:968.36px;font-size:18px;font-weight:400;color:#e0e0e0;letter-spacing:0px;-webkit-text-stroke:0.3px #e0e0e0;">DIR</div>
<div class="t" style="right:786.3px;top:967.52px;font-size:19px;font-weight:400;color:#e0e0e0;letter-spacing:-0.22px;-webkit-text-stroke:0.3px #e0e0e0;">07.11.2023, 19:52:46</div>
<div class="t" style="left:851px;width:600px;text-align:center;top:968.42px;font-size:19px;font-weight:400;color:#e0e0e0;letter-spacing:0.25px;-webkit-text-stroke:0.3px #e0e0e0;">0 bytes / 0 bytes in 0 / 0 file(s). 0 / 7 dir(s)</div>
<div class="a" style="left:0px;top:992px;width:1536px;height:49px;background:#2e2e31;"></div>
<div class="t" style="right:1023.5px;top:1009.22px;font-size:21px;font-weight:400;color:#e8e8e8;letter-spacing:0.4px;-webkit-text-stroke:0.3px #e8e8e8;">/Users/mac</div>
<div class="a" style="left:528px;top:1002px;width:991px;height:32px;border-radius:7px;background:#3a3a3d;border:1px solid #4a4a4d"></div>
<div class="a" style="left:1489px;top:1004.5px;width:27px;height:27px;border-radius:6px;background:linear-gradient(#3779e0,#2f67cb)"></div>
<svg style="left:1489px;top:1004.5px;" width="27" height="27" viewBox="0 0 27 27"><polyline points="8.5,11.5 13.5,16.5 18.5,11.5" fill="none" stroke="#fff" stroke-width="2" stroke-linecap="round" stroke-linejoin="round"/></svg>
<div class="a" style="left:0px;top:1041px;width:1536px;height:1px;background:#6b6b6e;"></div>
<div class="a" style="left:0;top:1042px;width:1536px;height:49px;background:linear-gradient(#4f4f53,#4a4a4e)"></div>
<div class="t" style="left:-172.15px;width:600px;text-align:center;top:1056.62px;font-size:21px;font-weight:400;color:#e8e8e8;letter-spacing:0.25px;-webkit-text-stroke:0.3px #e8e8e8;">View - F3</div>
<div class="a" style="left:256.0px;top:1042px;width:1px;height:47px;background:#6e6e71;"></div>
<div class="t" style="left:83.60000000000002px;width:600px;text-align:center;top:1056.62px;font-size:21px;font-weight:400;color:#e8e8e8;letter-spacing:0.25px;-webkit-text-stroke:0.3px #e8e8e8;">Edit - F4</div>
<div class="a" style="left:511.75px;top:1042px;width:1px;height:47px;background:#6e6e71;"></div>
<div class="t" style="left:339.35px;width:600px;text-align:center;top:1056.62px;font-size:21px;font-weight:400;color:#e8e8e8;letter-spacing:0.25px;-webkit-text-stroke:0.3px #e8e8e8;">Copy - F5</div>
<div class="a" style="left:767.5px;top:1042px;width:1px;height:47px;background:#6e6e71;"></div>
<div class="t" style="left:595.1px;width:600px;text-align:center;top:1056.62px;font-size:21px;font-weight:400;color:#e8e8e8;letter-spacing:0.25px;-webkit-text-stroke:0.3px #e8e8e8;">Move - F6</div>
<div class="a" style="left:1023.25px;top:1042px;width:1px;height:47px;background:#6e6e71;"></div>
<div class="t" style="left:850.8499999999999px;width:600px;text-align:center;top:1056.62px;font-size:21px;font-weight:400;color:#e8e8e8;letter-spacing:0.25px;-webkit-text-stroke:0.3px #e8e8e8;">New Folder - F7</div>
<div class="a" style="left:1279.0px;top:1042px;width:1px;height:47px;background:#6e6e71;"></div>
<div class="t" style="left:1106.6px;width:600px;text-align:center;top:1056.62px;font-size:21px;font-weight:400;color:#e8e8e8;letter-spacing:0.25px;-webkit-text-stroke:0.3px #e8e8e8;">Delete - F8</div>
<div class="a" style="left:246px;top:273px;width:1043.5px;height:557.6px;background:#252527"></div>
<div class="a" style="left:248px;top:262px;width:1040px;height:566.5px;border-radius:12.5px;background:#28282a;border:1px solid #56565a;box-shadow:0 0 0 1.6px #19191a"></div>
<div class="t" style="left:280.8px;top:290.42px;font-size:21px;font-weight:400;color:#e4e4e4;letter-spacing:0.35px;-webkit-text-stroke:0.3px #e4e4e4;">Search for:</div>
<div class="a" style="left:280.3px;top:318.2px;width:975.7px;height:31.2px;border-radius:7px;background:#313133;border:1px solid #404043"></div>
<div class="a" style="left:296.2px;top:320px;width:2px;height:25.3px;background:#f0f0f0;"></div>
<div class="a" style="left:1227.4px;top:321.4px;width:25.6px;height:25.6px;border-radius:6px;background:linear-gradient(#3779e0,#2f67cb)"></div>
<svg style="left:1227.4px;top:321.4px;" width="25.6" height="25.6" viewBox="0 0 25.6 25.6"><polyline points="8,11 12.8,15.6 17.6,11" fill="none" stroke="#fff" stroke-width="2" stroke-linecap="round" stroke-linejoin="round"/></svg>
<div class="a" style="left:357.2px;top:375.2px;width:22.8px;height:22.5px;border-radius:5px;background:linear-gradient(#5d5d60,#4c4c4f)"></div>
<div class="t" style="left:389.4px;top:377.82px;font-size:21px;font-weight:400;color:#e4e4e4;letter-spacing:-0.4px;-webkit-text-stroke:0.3px #e4e4e4;">RegEx</div>
<div class="a" style="left:357.2px;top:420.3px;width:22.8px;height:22.5px;border-radius:5px;background:linear-gradient(#5d5d60,#4c4c4f)"></div>
<div class="t" style="left:390.4px;top:422.72px;font-size:21px;font-weight:400;color:#e4e4e4;letter-spacing:0.35px;-webkit-text-stroke:0.3px #e4e4e4;">Case sensitive</div>
<div class="t" style="left:391.7px;top:463.12px;font-size:21px;font-weight:400;color:#e4e4e4;letter-spacing:0.4px;-webkit-text-stroke:0.3px #e4e4e4;">Search in subdirectories:</div>
<div class="a" style="left:647.4px;top:375.2px;width:22.8px;height:22.5px;border-radius:5px;background:linear-gradient(#3b3b3e,#353538)"></div>
<div class="t" style="left:680.6px;top:377.82px;font-size:21px;font-weight:400;color:#707073;letter-spacing:0.4px;-webkit-text-stroke:0.3px #707073;">Search in selections</div>
<div class="a" style="left:647.4px;top:420.6px;width:22.8px;height:22.5px;border-radius:5px;background:linear-gradient(#5d5d60,#4c4c4f)"></div>
<div class="t" style="left:680.6px;top:422.72px;font-size:21px;font-weight:400;color:#e4e4e4;letter-spacing:0.35px;-webkit-text-stroke:0.3px #e4e4e4;">Search in archives</div>
<div class="a" style="left:648.2px;top:457px;width:160.4px;height:30.5px;border-radius:7px;background:#636366"></div>
<div class="a" style="left:780px;top:459.8px;width:26px;height:24.7px;border-radius:5.5px;background:linear-gradient(#3779e0,#2f67cb)"></div>
<svg style="left:780px;top:459.8px;" width="26" height="24.7" viewBox="0 0 26 24.7"><polyline points="8.6,9.6 13,5.4 17.4,9.6" fill="none" stroke="#eef3fb" stroke-width="2" stroke-linecap="round" stroke-linejoin="round"/><polyline points="8.6,15 13,19.2 17.4,15" fill="none" stroke="#eef3fb" stroke-width="2" stroke-linecap="round" stroke-linejoin="round"/></svg>
<div class="t" style="left:661.25px;top:461.02px;font-size:21px;font-weight:400;color:#eeeeee;letter-spacing:0.3px;-webkit-text-stroke:0.3px #eeeeee;">all</div>
<div class="a" style="left:280px;top:512px;width:976px;height:1px;background:#3f3f41;"></div>
<div class="a" style="left:280.1px;top:543px;width:22.8px;height:22.5px;border-radius:5px;background:linear-gradient(#5d5d60,#4c4c4f)"></div>
<div class="t" style="left:312.9px;top:546.02px;font-size:21px;font-weight:400;color:#e4e4e4;letter-spacing:0.35px;-webkit-text-stroke:0.3px #e4e4e4;">Find text:</div>
<div class="a" style="left:280px;top:582px;width:976px;height:31px;border-radius:7px;background:#2d2d2f;border:1px solid #373739"></div>
<div class="a" style="left:1226.9px;top:584px;width:26.4px;height:26px;border-radius:6px;background:#454548"></div>
<svg style="left:1226.9px;top:584px;" width="26.4" height="26" viewBox="0 0 26.4 26"><polyline points="8.5,11 13.2,15.5 17.9,11" fill="none" stroke="#8c8c8f" stroke-width="1.8" stroke-linecap="round" stroke-linejoin="round"/></svg>
<div class="a" style="left:357.4px;top:640.4px;width:22.8px;height:22.5px;border-radius:5px;background:linear-gradient(#3b3b3e,#353538)"></div>
<div class="t" style="left:389.2px;top:642.62px;font-size:21px;font-weight:400;color:#707073;letter-spacing:-0.4px;-webkit-text-stroke:0.3px #707073;">RegEx</div>
<div class="a" style="left:357.4px;top:687px;width:22.8px;height:22.5px;border-radius:5px;background:linear-gradient(#3b3b3e,#353538)"></div>
<div class="t" style="left:390.2px;top:689.22px;font-size:21px;font-weight:400;color:#707073;letter-spacing:0.35px;-webkit-text-stroke:0.3px #707073;">Case sensitive</div>
<div class="a" style="left:647.6px;top:640.4px;width:22.8px;height:22.5px;border-radius:5px;background:linear-gradient(#3b3b3e,#353538)"></div>
<div class="t" style="left:681px;top:642.62px;font-size:21px;font-weight:400;color:#707073;letter-spacing:0.35px;-webkit-text-stroke:0.3px #707073;">Entire Words</div>
<div class="a" style="left:647.6px;top:679.4px;width:161px;height:31px;border-radius:7px;background:#3c3c3f"></div>
<div class="t" style="left:661px;top:683.42px;font-size:21px;font-weight:400;color:#7a7a7d;letter-spacing:0.3px;-webkit-text-stroke:0.3px #7a7a7d;">Unicode</div>
<svg style="left:780px;top:682px;" width="26" height="25" viewBox="0 0 26 25"><polyline points="8.6,9.6 13,5.4 17.4,9.6" fill="none" stroke="#79797c" stroke-width="1.8" stroke-linecap="round" stroke-linejoin="round"/><polyline points="8.6,15 13,19.2 17.4,15" fill="none" stroke="#79797c" stroke-width="1.8" stroke-linecap="round" stroke-linejoin="round"/></svg>
<div class="a" style="left:249px;top:750.5px;width:1038px;height:1px;background:#3b3b3d;"></div>
<div class="a" style="left:975.3px;top:774.6px;width:130.4px;height:32.2px;border-radius:7px;background:#646467;box-shadow:inset 0 0.5px 0 #78787b"></div>
<div class="t" style="left:740.5px;width:600px;text-align:center;top:779.52px;font-size:21px;font-weight:400;color:#efefef;letter-spacing:0.3px;-webkit-text-stroke:0.3px #efefef;">Cancel</div>
<div class="a" style="left:1125.3px;top:774.6px;width:130.3px;height:32.2px;border-radius:7px;background:linear-gradient(#3273e6,#2a63d4)"></div>
<div class="t" style="left:890.5px;width:600px;text-align:center;top:779.52px;font-size:21px;font-weight:400;color:#ffffff;letter-spacing:0.3px;-webkit-text-stroke:0.3px #ffffff;">Search</div>
<svg style="left:0;top:0;z-index:40" width="1536" height="1091">
 <rect x="1193.2" y="15" width="65.8" height="60.7" rx="29" ry="27.5" fill="none" stroke="#e05535" stroke-width="8.2"/>
 <line x1="1194.5" y1="80.9" x2="1002.5" y2="280" stroke="#e05535" stroke-width="9.2" stroke-linecap="butt"/>
 <path d="M980.2 302.5 L988.4 270.4 L997.1 275.9 L1005.8 284.6 L1011.8 292.9 Z" fill="#e05535" stroke="#e05535" stroke-width="1.5" stroke-linejoin="round"/>
</svg>
</div>
<div id="winborder"></div>
</body></html>
